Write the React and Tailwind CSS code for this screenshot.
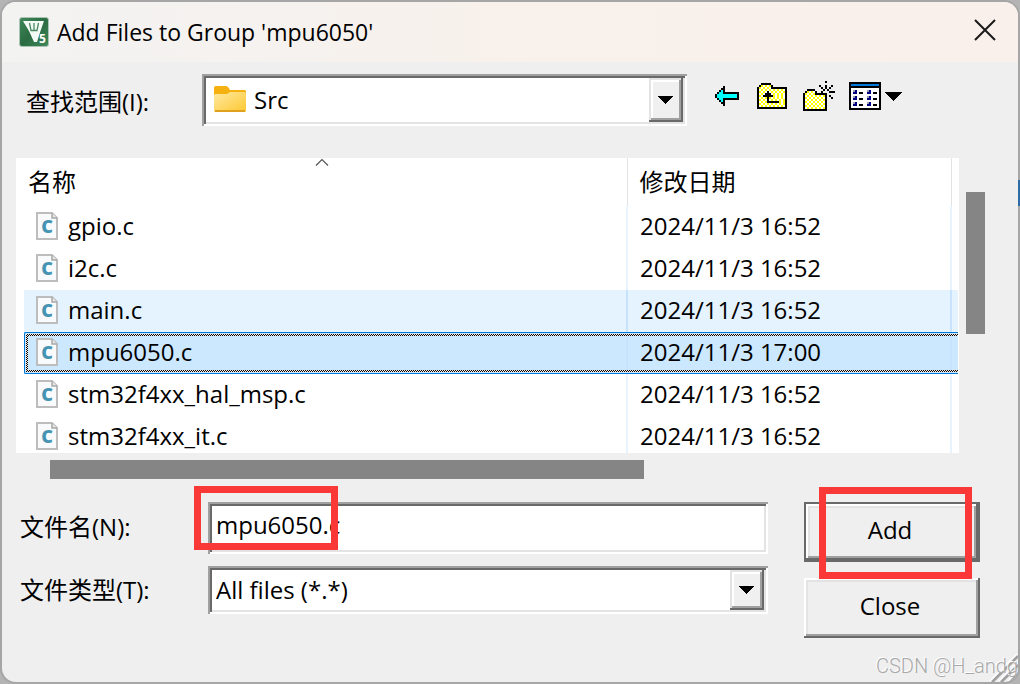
import { useState } from 'react';

const files = [
  { name: 'gpio.c', date: '2024/11/3 16:52' },
  { name: 'i2c.c', date: '2024/11/3 16:52' },
  { name: 'main.c', date: '2024/11/3 16:52' },
  { name: 'mpu6050.c', date: '2024/11/3 17:00' },
  { name: 'stm32f4xx_hal_msp.c', date: '2024/11/3 16:52' },
  { name: 'stm32f4xx_it.c', date: '2024/11/3 16:52' },
];

const palette = {
  k: '#000000',
  y: '#ffff00',
  w: '#ffffff',
  c: '#00ffff',
  b: '#0078d7',
  n: '#000080',
  g: '#a0a0b0',
};

const backRows = [
  '    k       ',
  '   kk       ',
  '  kck       ',
  ' kcckkkkkkkk',
  'kcccccccccck',
  'kcccccccccck',
  ' kcckkkkkkkk',
  '  kck       ',
  '   kk       ',
  '    k       ',
];

const upRows = [
  '  kkkkk        ',
  ' kywywyk       ',
  'kywywywkkkkkkkk',
  'kwywywywywywywk',
  'kywywkwywywywyk',
  'kwywkkkwywywywk',
  'kywkkkkkywywywk',
  'kwywykywywywywk',
  'kywywkwywywywyk',
  'kwywykkkkkkywyk',
  'kywywywywywywyk',
  'kwywywywywywywk',
  'kkkkkkkkkkkkkkk',
];

const newRows = [
  '           k    ',
  '                ',
  '        k  k  k ',
  '         k k k  ',
  '  kkkk    k k   ',
  ' kywywk  k   kkk',
  'kywywykkkkkk    ',
  'kwywywywywyk k  ',
  'kywywywywywk  k ',
  'kwywywywywyk    ',
  'kywywywywywk    ',
  'kwywywywywyk    ',
  'kywywywywywk    ',
  'kwywywywywyk    ',
  'kkkkkkkkkkkk    ',
];

const viewRows = [
  'kkkkkkkkkkkkkkkk',
  'kbbbbbbbbbbbbbbk',
  'kkkkkkkkkkkkkkkk',
  'kwwwwwwwwwwwwwwk',
  'kwgnwwwwwgnwwwwk',
  'kwnnwkkwwnnwkkwk',
  'kwwwwwwwwwwwwwwk',
  'kwgnwwwwwgnwwwwk',
  'kwnnwkkwwnnwkkwk',
  'kwwwwwwwwwwwwwwk',
  'kwgnwwwwwgnwwwwk',
  'kwnnwkkwwnnwkkwk',
  'kwwwwwwwwwwwwwwk',
  'kkkkkkkkkkkkkkkk',
];

const PixelIcon = ({ rows }) => (
  <svg
    width={rows[0].length * 2}
    height={rows.length * 2}
    viewBox={`0 0 ${rows[0].length} ${rows.length}`}
    shapeRendering="crispEdges"
    aria-hidden="true"
  >
    {rows.map((row, y) =>
      row.split('').map((cell, x) =>
        cell === ' ' ? null : <rect key={`${x}-${y}`} x={x} y={y} width="1" height="1" fill={palette[cell]} />
      )
    )}
  </svg>
);

const AppLogo = () => (
  <svg width="30" height="30" viewBox="0 0 30 30" aria-hidden="true">
    <defs>
      <linearGradient id="logo" x1="0" y1="0" x2="1" y2="1">
        <stop offset="0" stopColor="#3f8a5a" />
        <stop offset="0.5" stopColor="#2b6b42" />
        <stop offset="1" stopColor="#3f8a5a" />
      </linearGradient>
    </defs>
    <rect x="0.5" y="0.5" width="29" height="29" rx="2.500" fill="url(#logo)" stroke="#a9c4b4" />
    <path d="M4 4h21l-3.500 10-3.500 11h-3L10 14z" fill="#f4faf6" />
    <path d="M10.500 6l1.500 7.500h6L19.500 6M15 6v7" stroke="#4a8a62" strokeWidth="1.300" fill="none" />
    <text x="20" y="26" fontSize="12" fontWeight="700" fontFamily="Open Sans, sans-serif" fill="#ffffff">5</text>
  </svg>
);

const FolderIcon = () => (
  <svg width="32" height="26" viewBox="0 0 32 26" aria-hidden="true">
    <defs>
      <linearGradient id="folder" x1="0" y1="0" x2="1" y2="1">
        <stop offset="0" stopColor="#ffe9a2" />
        <stop offset="1" stopColor="#fdc830" />
      </linearGradient>
    </defs>
    <path d="M0 1.500Q0 0 1.500 0H12q1.500 0 2.500 1.500L16 4h14.500Q32 4 32 5.500V12H0z" fill="#f5b10f" />
    <path d="M0 9.500Q0 8 1.500 8H13l3-2h14.500Q32 6 32 7.500v17q0 1.500-1.500 1.500h-29Q0 26 0 24.500z" fill="url(#folder)" />
    <path d="M1 25h30" stroke="#e0a11f" strokeWidth="2" />
  </svg>
);

const CFileIcon = () => (
  <svg width="22" height="28" viewBox="0 0 22 28" className="shrink-0" aria-hidden="true">
    <path d="M1 1h15l5 5v21H1z" fill="#f9fafb" stroke="#bdbdbd" strokeWidth="2" />
    <path d="M16 1v5h5" fill="#e6e6e6" stroke="#a9a9a9" strokeWidth="1.500" />
    <text x="11" y="21" textAnchor="middle" fontSize="18" fontWeight="800" fontFamily="Open Sans, sans-serif" fill="#4594b3">
      C
    </text>
  </svg>
);

const Caret = ({ width = 15, height = 8 }) => (
  <svg width={width} height={height} viewBox="0 0 16 8" preserveAspectRatio="none" shapeRendering="crispEdges" aria-hidden="true">
    <path d="M0 0h16L8 8z" fill="#000000" />
  </svg>
);

const sunken =
  'shadow-[inset_2px_2px_#a0a0a0,inset_-2px_-2px_#ffffff,inset_4px_4px_#696969,inset_-4px_-4px_#e3e3e3]';
const raised =
  'shadow-[inset_-2px_-2px_#696969,inset_2px_2px_#ffffff,inset_-4px_-4px_#a0a0a0,inset_4px_4px_#e3e3e3]';
const dropButton =
  'shadow-[inset_-2px_-2px_#696969,inset_2px_2px_#e3e3e3,inset_-4px_-4px_#a0a0a0,inset_4px_4px_#ffffff]';

const DropArrow = () => (
  <span
    className={`pointer-events-none absolute inset-y-1 right-1 flex w-[34px] items-center justify-center bg-[#f0f0f0] pr-0.5 ${dropButton}`}
  >
    <Caret />
  </span>
);

const checker = 'absolute bg-[repeating-conic-gradient(#000000_0_25%,#f8e6d8_0_50%)] bg-[length:2px_2px]';

const FocusFrame = () => (
  <span className="pointer-events-none absolute inset-0 rounded-l-xs border-y border-l border-[#0078d7]">
    <span className={`${checker} top-px right-0 left-px h-[2px]`} />
    <span className={`${checker} right-0 bottom-px left-px h-[2px]`} />
    <span className={`${checker} inset-y-px left-px w-[2px]`} />
  </span>
);

const FileTable = ({ selected, onSelect }) => (
  <div className="h-[295px] min-w-0 flex-1 overflow-hidden bg-white pr-px pl-2">
    <table className="w-full table-fixed border-collapse text-left">
      <colgroup>
        <col />
        <col className="w-[324px]" />
        <col className="w-[7px]" />
      </colgroup>
      <thead>
        <tr className="h-12">
          <th className="relative border-r border-[#e3e3e3] pl-1 font-normal">
            名称
            <svg className="absolute top-0 left-1/2 -ml-2.5" width="14" height="9" viewBox="0 0 14 9" aria-hidden="true">
              <path d="M1 7.500l6-6 6 6" fill="none" stroke="#555555" strokeWidth="1.200" />
            </svg>
          </th>
          <th className="border-r border-[#e3e3e3] pl-3 font-normal">修改日期</th>
          <th />
        </tr>
      </thead>
      <tbody>
        {files.map((file) => {
          const isSelected = file.name === selected;
          const bg = isSelected ? 'bg-[#cce8ff]' : file.name === 'main.c' ? 'bg-[#e5f3ff]' : '';
          const line = bg ? 'border-[#c6e2fd]' : 'border-[#e9f3fe]';
          return (
            <tr key={file.name} onClick={() => onSelect(file.name)} className={`relative h-[42px] ${bg}`}>
              <td className={`border-r-2 p-0 pb-0.5 pl-3 ${line}`}>
                <div className="flex items-center gap-[10px]">
                  <CFileIcon />
                  <span>{file.name}</span>
                </div>
                {isSelected && <FocusFrame />}
              </td>
              <td className={`border-r-2 p-0 pb-0.5 pl-3 ${line}`}>{file.date}</td>
              <td className="p-0" />
            </tr>
          );
        })}
      </tbody>
    </table>
  </div>
);

export default function App() {
  const [fileName, setFileName] = useState('mpu6050.c');

  return (
    <div className="relative flex min-h-screen bg-[#b4b4b4] font-['Open_Sans','Noto_Sans_CJK_SC',sans-serif] text-2xl leading-8 text-black">
      <div className="relative m-[2px] flex flex-1 flex-col overflow-hidden rounded-[14px] bg-[#efefef] shadow-[0_0_0_2px_#a6a6a6]">
        {/* Title bar */}
        <header className="flex h-[60px] items-center gap-2 bg-linear-to-r from-[#f3f3f2] via-[#f8f1ec] to-[#faf0eb] pr-[22px] pl-[17px]">
          <AppLogo />
          <h1 className="flex-1 text-[23px]">Add Files to Group 'mpu6050'</h1>
          <button aria-label="Close window" className="pb-1">
            <svg width="22" height="22" viewBox="0 0 22 22" aria-hidden="true">
              <path d="M1 1l20 20M21 1L1 21" stroke="#1a1a1a" strokeWidth="2" />
            </svg>
          </button>
        </header>

        {/* Look in */}
        <div className="flex items-center pt-3 pr-[116px] pl-6">
          <label htmlFor="folder-select" className="w-44 pt-1">查找范围(I):</label>
          <div className={`relative h-[52px] flex-1 bg-white p-1 ${sunken}`}>
            <span className="pointer-events-none absolute top-3 left-3">
              <FolderIcon />
            </span>
            <select id="folder-select" className="h-full w-full appearance-none pl-12 outline-none">
              <option>Src</option>
            </select>
            <DropArrow />
          </div>
          <div className="mb-2 ml-7 flex items-center">
            <button aria-label="Back" className="mr-[18px]"><PixelIcon rows={backRows} /></button>
            <button aria-label="Up one level" className="mr-4"><PixelIcon rows={upRows} /></button>
            <button aria-label="New folder" className="mr-[14px]"><PixelIcon rows={newRows} /></button>
            <button aria-label="View menu" className="flex items-center gap-1">
              <PixelIcon rows={viewRows} />
              <Caret width={17} height={9} />
            </button>
          </div>
        </div>

        {/* File list */}
        <div className="mt-8 flex gap-[7px] pr-[33px] pl-[14px]">
          <FileTable selected="mpu6050.c" onSelect={setFileName} />
          <div className="mt-[34px] h-[142px] w-[19px] bg-[#858585]" />
        </div>
        <div className="mt-[7px] mr-[374px] ml-12 h-[19px] bg-[#858585]" />

        {/* Name, type and actions */}
        <div className="mt-[23px] flex gap-9 pr-[38px] pl-[18px]">
          <div className="flex flex-1 flex-col gap-3">
            <div className="flex items-center">
              <label htmlFor="file-name" className="w-[188px] pb-0.5">文件名(N):</label>
              <div className={`relative h-[52px] flex-1 bg-white p-1 ${sunken}`}>
                <input
                  id="file-name"
                  value={fileName}
                  onChange={(e) => setFileName(e.target.value)}
                  className="block h-9 w-full pl-1 outline-none"
                />
                <span className="pointer-events-none absolute -top-4 -left-[14px] h-16 w-36 border-7 border-[#fb3838]" />
              </div>
            </div>
            <div className="flex items-center">
              <label htmlFor="file-type" className="w-[188px]">文件类型(T):</label>
              <div className={`relative h-12 flex-1 bg-white p-1 ${sunken}`}>
                <select id="file-type" className="h-full w-full appearance-none pl-1 outline-none">
                  <option>All files (*.*)</option>
                </select>
                <DropArrow />
              </div>
            </div>
          </div>
          <div className="relative flex w-44 flex-col gap-4">
            <button className="h-[60px] bg-[#efefef] pr-1 pb-1 shadow-[inset_0_0_0_2px_#696969,inset_-4px_-4px_#696969,inset_4px_4px_#ffffff,inset_-6px_-6px_#a0a0a0,inset_6px_6px_#e3e3e3]">
              Add
            </button>
            <button className={`h-[60px] bg-[#efefef] pr-1 pb-1 ${raised}`}>Close</button>
            <span className="pointer-events-none absolute -top-[15px] left-[15px] h-[92px] w-[153px] border-7 border-[#fb3838]" />
          </div>
        </div>

        <svg className="absolute right-0 bottom-0" width="28" height="28" viewBox="0 0 28 28" aria-hidden="true">
          <path d="M2 28L28 2M11 28L28 11M20 28l8-8" stroke="#a0a0a0" strokeWidth="3" />
          <path d="M0 27L27 0M9 27L28 8M18 27L28 17" stroke="#ffffff" strokeWidth="1.500" />
        </svg>
        <span className="absolute right-0 bottom-1 font-['Roboto',sans-serif] text-[20px] leading-6 font-light text-[#a9a9a9] [text-shadow:-1px_-1px_#ffffff]">
          CSDN @H_andg
        </span>
      </div>
      <span className="absolute top-[180px] right-0 h-[26px] w-[2px] bg-[#2d6ca5]" />
    </div>
  );
}
